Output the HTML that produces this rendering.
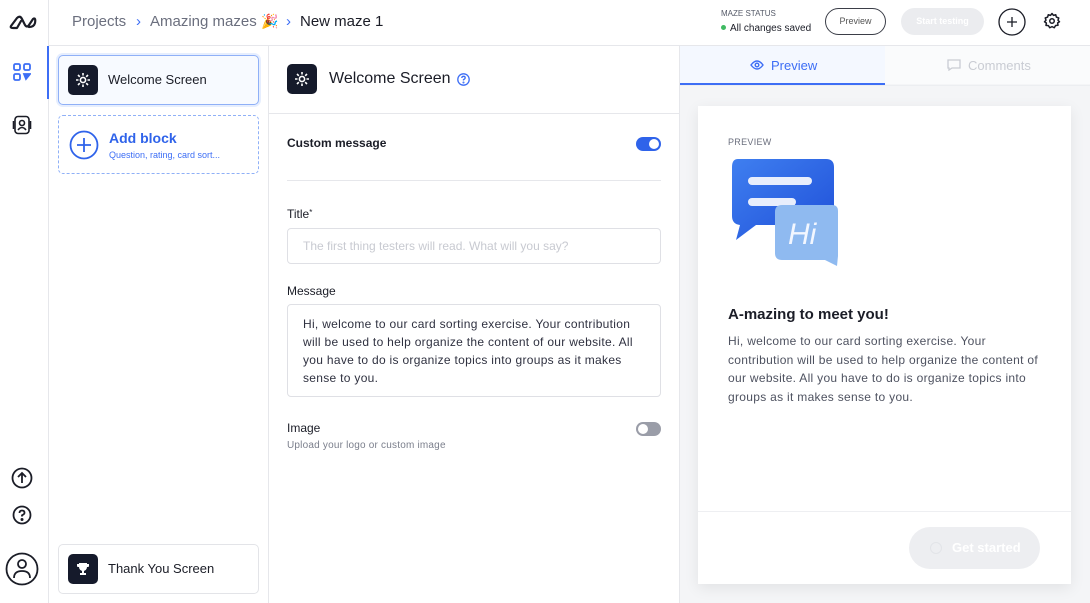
<!DOCTYPE html>
<html><head><meta charset="utf-8"><style>
*{box-sizing:border-box;margin:0;padding:0}
body{width:1090px;height:603px;overflow:hidden;background:#fff;font-family:"Liberation Sans",sans-serif;color:#1b1d27;position:relative}
.a{position:absolute}
.ib{position:absolute;width:30px;height:30px;border-radius:5px;background:#151a2b;display:flex;align-items:center;justify-content:center}
.lbl{font-size:13px;color:#1b1d27}
.toggle{position:absolute;width:25px;height:14px;border-radius:7px}
.toggle i{position:absolute;top:2px;width:10px;height:10px;border-radius:50%;background:#fff}
.bc{position:absolute;top:13px;font-size:15px;color:#6b6f7e;white-space:nowrap}
.ch{position:absolute;top:13px;font-size:15px;color:#3d6ef5}
</style></head><body>
<!-- left rail -->
<div class="a" style="left:48px;top:0;width:1px;height:603px;background:#e6e7eb"></div>
<div class="a" style="left:47px;top:46px;width:2px;height:53px;background:#3d6ef5"></div>
<svg class="a" style="left:8px;top:13px" width="30" height="18" viewBox="0 0 30 18"><path d="M3 13 L9 5 Q12 2 14 6 L17 12 Q19 15 21 12 L25 6 Q28 4 27 10 Q26 14 21 14 M3 13 Q2 15 5 15 L9 15 L13 8" fill="none" stroke="#1b1d27" stroke-width="2.2" stroke-linecap="round" stroke-linejoin="round"/></svg>
<svg class="a" style="left:13px;top:63px" width="18" height="18" viewBox="0 0 18 18" fill="none" stroke="#3d6ef5" stroke-width="1.8"><rect x="1" y="1" width="6" height="6" rx="1.5"/><rect x="11" y="1" width="6" height="6" rx="1.5"/><rect x="1" y="11" width="6" height="6" rx="1.5"/><path d="M11 11h6l-4 5z" fill="#3d6ef5"/></svg>
<svg class="a" style="left:12px;top:115px" width="20" height="20" viewBox="0 0 20 20" fill="none" stroke="#1b1d27" stroke-width="1.6"><rect x="3" y="1.5" width="14" height="17" rx="3"/><path d="M1.5 6v8M18.5 6v8"/><circle cx="10" cy="8" r="2.5"/><path d="M6 15q4-5 8 0"/></svg>
<svg class="a" style="left:11px;top:467px" width="22" height="22" viewBox="0 0 22 22" fill="none" stroke="#1b1d27" stroke-width="1.8"><circle cx="11" cy="11" r="9.5"/><path d="M11 16V6M7 10l4-4 4 4"/></svg>
<svg class="a" style="left:12px;top:505px" width="20" height="20" viewBox="0 0 20 20" fill="none" stroke="#1b1d27" stroke-width="1.8"><circle cx="10" cy="10" r="8.5"/><path d="M7.5 8q0-2.5 2.5-2.5t2.5 2.3q0 1.5-2.5 2.5v1.2"/><circle cx="10" cy="14.5" r=".6" fill="#1b1d27"/></svg>
<svg class="a" style="left:5px;top:552px" width="34" height="34" viewBox="0 0 34 34" fill="none" stroke="#1b1d27" stroke-width="1.8"><circle cx="17" cy="17" r="15.5"/><circle cx="17" cy="12" r="4"/><path d="M9 26q0-7 8-7t8 7"/></svg>
<!-- top bar -->
<div class="a" style="left:49px;top:45px;width:1041px;height:1px;background:#e6e7eb"></div>
<div class="bc" style="left:72px">Projects</div>
<div class="ch" style="left:136px">›</div>
<div class="bc" style="left:150px">Amazing mazes</div>
<div class="bc" style="left:261px;font-size:14px">🎉</div>
<div class="ch" style="left:286px">›</div>
<div class="bc" style="left:300px;color:#1b1d27">New maze 1</div>
<div class="a" style="left:721px;top:9px;font-size:8px;color:#555a68">MAZE STATUS</div>
<div class="a" style="left:721px;top:23px;font-size:10px;color:#1b1d27"><span style="display:inline-block;width:5px;height:5px;border-radius:50%;background:#3fba62;margin-right:4px;vertical-align:1px"></span>All changes saved</div>
<div class="a" style="left:825px;top:8px;width:61px;height:27px;border:1.5px solid #3b3e48;border-radius:14px;font-size:9px;color:#555;text-align:center;line-height:24px">Preview</div>
<div class="a" style="left:901px;top:8px;width:83px;height:27px;border-radius:14px;background:#ebecef;font-size:9px;color:#fff;text-align:center;line-height:27px;font-weight:bold">Start testing</div>
<svg class="a" style="left:998px;top:8px" width="28" height="28" viewBox="0 0 28 28" fill="none" stroke="#1b1d27" stroke-width="1.3"><circle cx="14" cy="14" r="13"/><path d="M14 9v10M9 14h10"/></svg>
<svg class="a" style="left:1043px;top:12px" width="18" height="18" viewBox="0 0 24 24" fill="none" stroke="#1b1d27" stroke-width="2"><circle cx="12" cy="12" r="3"/><path d="M12 2l2 2.5 3-.8.8 3L21 8l-1 3 2 2-2.5 1.5.5 3.2-3.2.3L15 21l-3-1.5L9 21l-1.8-2.8-3.2-.3.5-3.2L2 13l2-2-1-3 3.2-1.3.8-3 3 .8z" stroke-linejoin="round"/></svg>
<!-- block list -->
<div class="a" style="left:268px;top:46px;width:1px;height:557px;background:#e6e7eb"></div>
<div class="a" style="left:58px;top:55px;width:201px;height:50px;border:1.5px solid #8fb0f7;border-radius:5px;background:#f7faff;box-shadow:0 0 0 2px #e6eefe"></div>
<div class="ib" style="left:68px;top:65px"><svg width="14" height="14" viewBox="0 0 14 14" fill="none" stroke="#fff" stroke-width="1.6"><circle cx="7" cy="7" r="2.6"/><path d="M7 0v2.5M7 11.5V14M0 7h2.5M11.5 7H14M2 2l1.8 1.8M10.2 10.2L12 12M2 12l1.8-1.8M10.2 3.8L12 2"/></svg></div>
<div class="a lbl" style="left:108px;top:72px">Welcome Screen</div>
<div class="a" style="left:58px;top:115px;width:201px;height:59px;border:1px dashed #8fb0f7;border-radius:5px"></div>
<svg class="a" style="left:69px;top:130px" width="30" height="30" viewBox="0 0 30 30" fill="none" stroke="#2f63ea" stroke-width="1.8"><circle cx="15" cy="15" r="13.5"/><path d="M15 8v14M8 15h14"/></svg>
<div class="a" style="left:109px;top:130px;font-size:14px;font-weight:bold;color:#2f63ea">Add block</div>
<div class="a" style="left:109px;top:150px;font-size:9px;color:#3d6ef5">Question, rating, card sort...</div>
<div class="a" style="left:58px;top:544px;width:201px;height:50px;border:1px solid #e3e4e8;border-radius:5px"></div>
<div class="ib" style="left:68px;top:554px"><svg width="14" height="14" viewBox="0 0 14 14" fill="#fff"><path d="M3 1h8v4a4 4 0 0 1-8 0z"/><path d="M1 2h2v3H2a1 1 0 0 1-1-1zM13 2h-2v3h1a1 1 0 0 0 1-1z"/><rect x="6" y="8" width="2" height="3"/><rect x="4" y="11" width="6" height="2"/></svg></div>
<div class="a lbl" style="left:108px;top:561px">Thank You Screen</div>
<!-- editor -->
<div class="a" style="left:679px;top:46px;width:1px;height:557px;background:#e6e7eb"></div>
<div class="a" style="left:269px;top:113px;width:410px;height:1px;background:#e6e7eb"></div>
<div class="ib" style="left:287px;top:64px"><svg width="14" height="14" viewBox="0 0 14 14" fill="none" stroke="#fff" stroke-width="1.6"><circle cx="7" cy="7" r="2.6"/><path d="M7 0v2.5M7 11.5V14M0 7h2.5M11.5 7H14M2 2l1.8 1.8M10.2 10.2L12 12M2 12l1.8-1.8M10.2 3.8L12 2"/></svg></div>
<div class="a" style="left:329px;top:70px;font-size:16px">Welcome Screen</div>
<svg class="a" style="left:457px;top:73px" width="13" height="13" viewBox="0 0 13 13" fill="none" stroke="#3d6ef5" stroke-width="1.3"><circle cx="6.5" cy="6.5" r="5.7"/><path d="M4.8 5q0-1.7 1.7-1.7T8.2 4.8Q8.2 6 6.5 6.6v.9"/><circle cx="6.5" cy="9.5" r=".4" fill="#3d6ef5"/></svg>
<div class="a" style="left:287px;top:136px;font-size:12px;font-weight:bold">Custom message</div>
<div class="toggle" style="left:636px;top:137px;background:#2f63ea"><i style="left:13px"></i></div>
<div class="a" style="left:287px;top:180px;width:374px;height:1px;background:#e6e7eb"></div>
<div class="a" style="left:287px;top:207px;font-size:12px">Title<span style="font-size:8px;vertical-align:3px">*</span></div>
<div class="a" style="left:287px;top:228px;width:374px;height:36px;border:1px solid #dfe0e5;border-radius:4px;font-size:12px;color:#c8cad1;padding:10px 15px">The first thing testers will read. What will you say?</div>
<div class="a" style="left:287px;top:284px;font-size:12px">Message</div>
<div class="a" style="left:287px;top:304px;width:374px;height:93px;border:1px solid #dfe0e5;border-radius:4px;font-size:12px;line-height:18px;color:#2f3140;padding:10px 15px;letter-spacing:.3px">Hi, welcome to our card sorting exercise. Your contribution will be used to help organize the content of our website. All you have to do is organize topics into groups as it makes sense to you.</div>
<div class="a" style="left:287px;top:421px;font-size:12px">Image</div>
<div class="a" style="left:287px;top:440px;font-size:10px;color:#7b7f8c;letter-spacing:.2px">Upload your logo or custom image</div>
<div class="toggle" style="left:636px;top:422px;background:#9a9da8"><i style="left:2px"></i></div>
<!-- right panel -->
<div class="a" style="left:680px;top:46px;width:410px;height:557px;background:#f4f5f7"></div>
<div class="a" style="left:680px;top:46px;width:205px;height:38px;background:#f4f8ff"></div>
<div class="a" style="left:885px;top:46px;width:205px;height:38px;background:#fafbfc"></div>
<div class="a" style="left:680px;top:83px;width:205px;height:2px;background:#3d6ef5"></div>
<div class="a" style="left:680px;top:85px;width:410px;height:1px;background:#eceef1"></div>
<svg class="a" style="left:750px;top:60px" width="14" height="10" viewBox="0 0 14 10" fill="none" stroke="#3d6ef5" stroke-width="1.4"><path d="M1 5q6-8 12 0q-6 8-12 0z"/><circle cx="7" cy="5" r="1.8"/></svg>
<div class="a" style="left:771px;top:58px;font-size:13px;color:#3d6ef5">Preview</div>
<svg class="a" style="left:947px;top:59px" width="14" height="12" viewBox="0 0 14 12" fill="none" stroke="#c9ccd3" stroke-width="1.3"><path d="M1 1h12v8H5l-3 2V9H1z"/></svg>
<div class="a" style="left:968px;top:58px;font-size:13px;color:#c9ccd3">Comments</div>
<div class="a" style="left:698px;top:106px;width:373px;height:478px;background:#fff;box-shadow:0 4px 14px rgba(0,0,0,.08)"></div>
<div class="a" style="left:698px;top:511px;width:373px;height:1px;background:#eeeff2"></div>
<div class="a" style="left:728px;top:137px;font-size:9px;color:#6b6f7e;letter-spacing:.3px">PREVIEW</div>
<svg class="a" style="left:730px;top:158px" width="110" height="110" viewBox="0 0 110 110">
<defs><linearGradient id="g1" x1="0" y1="0" x2="1" y2="1"><stop offset="0" stop-color="#3f7ff0"/><stop offset="1" stop-color="#1f4fd8"/></linearGradient></defs>
<path d="M8 1h88q8 0 8 8v50q0 8-8 8H26L6 82l4-15Q2 66 2 58V9q0-8 6-8z" fill="url(#g1)"/>
<rect x="18" y="19" width="64" height="8" rx="4" fill="#e8eefc"/>
<rect x="18" y="40" width="48" height="8" rx="4" fill="#e8eefc"/>
<path d="M52 47h50q6 0 6 6v45l-1 10-12-6H52q-7 0-7-7V54q0-7 7-7z" fill="#8fbaf0"/>
<text x="58" y="86" font-family="Liberation Sans,sans-serif" font-size="30" fill="#f3f7ff" font-style="italic">Hi</text>
</svg>
<div class="a" style="left:728px;top:306px;font-size:15px;font-weight:bold">A-mazing to meet you!</div>
<div class="a" style="left:728px;top:332px;width:322px;font-size:12px;line-height:18.5px;color:#4e5260;letter-spacing:.3px">Hi, welcome to our card sorting exercise. Your contribution will be used to help organize the content of our website. All you have to do is organize topics into groups as it makes sense to you.</div>
<div class="a" style="left:909px;top:527px;width:131px;height:42px;border-radius:21px;background:#edeef1"></div>
<div class="a" style="left:930px;top:542px;width:12px;height:12px;border-radius:50%;border:1.5px solid #e2e4e8"></div>
<div class="a" style="left:952px;top:540px;font-size:13px;font-weight:bold;color:#fff">Get started</div>
</body></html>
